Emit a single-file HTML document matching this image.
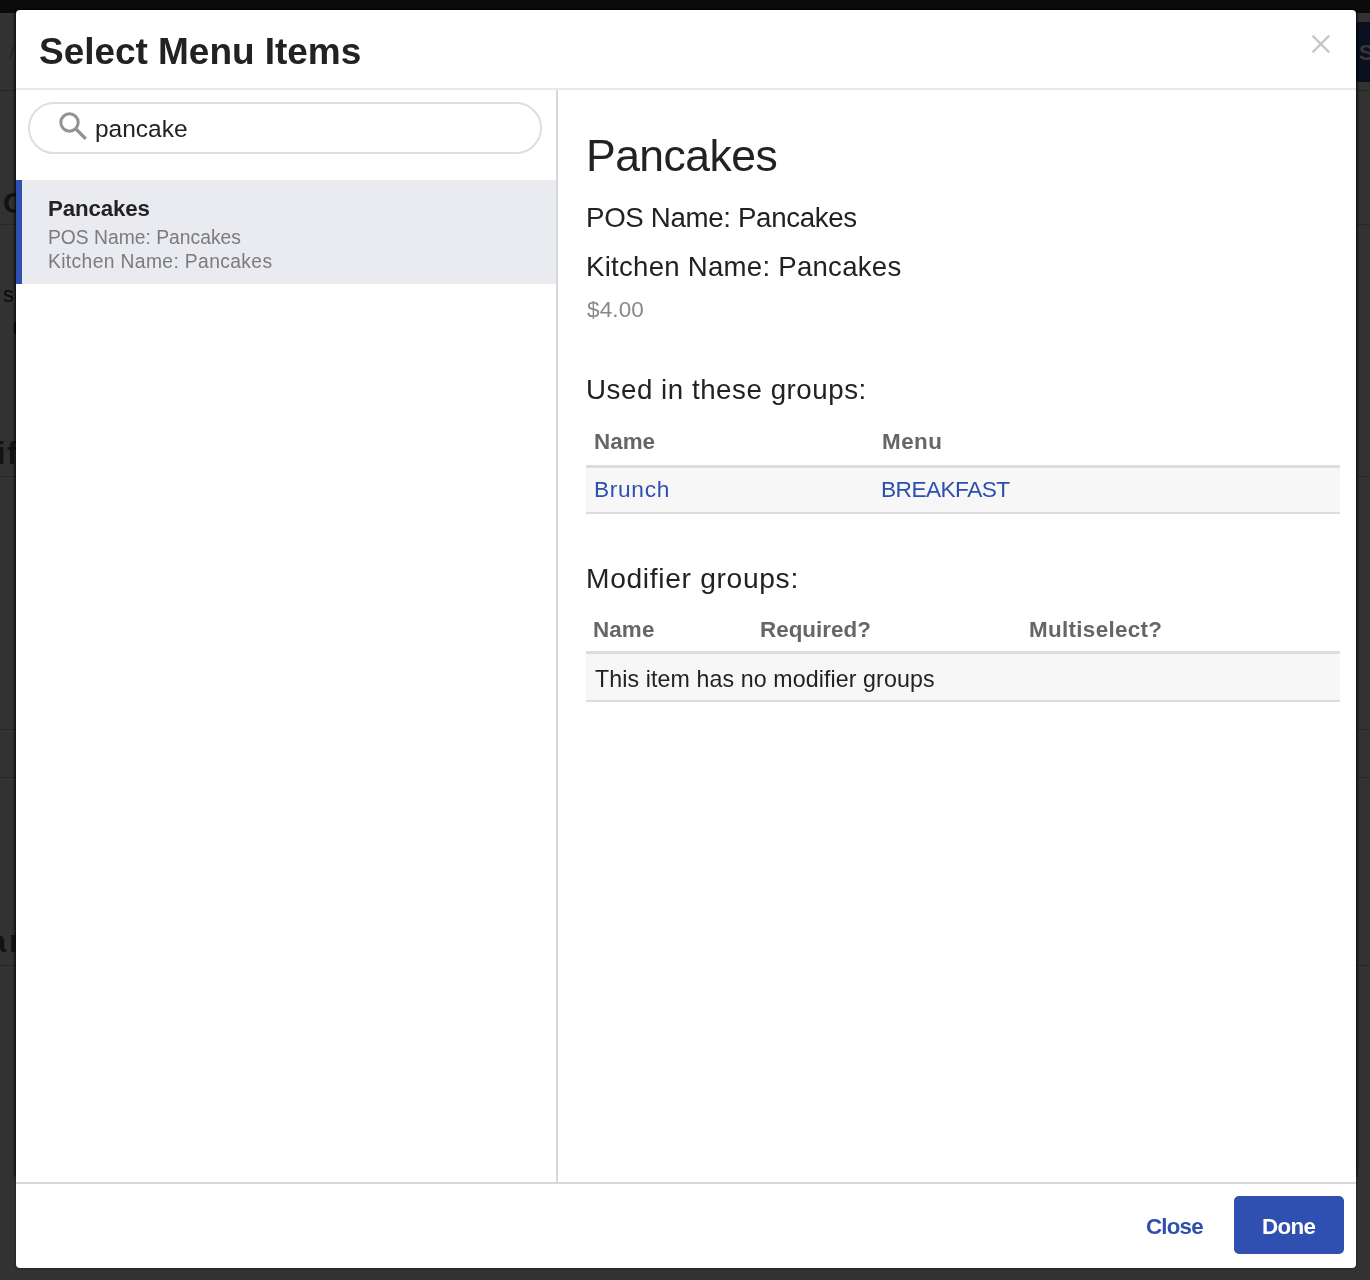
<!DOCTYPE html>
<html><head><meta charset="utf-8"><title>Select Menu Items</title><style>
html,body{margin:0;padding:0;}
body{width:1370px;height:1280px;position:relative;overflow:hidden;background:#323232;font-family:"Liberation Sans",sans-serif;}
.a{position:absolute;}
.t{position:absolute;line-height:1;white-space:nowrap;will-change:transform;}
</style></head><body>
<div class="a" style="left:0;top:0;width:1370px;height:13px;background:#0b0b0b"></div>
<div class="a" style="left:1000px;top:22px;width:370px;height:60px;background:#0a1020"></div>
<div class="a" style="left:0;top:90px;width:1370px;height:1px;background:#262626"></div>
<div class="a" style="left:0;top:224px;width:1370px;height:1px;background:#262626"></div>
<div class="a" style="left:0;top:476px;width:1370px;height:1px;background:#262626"></div>
<div class="a" style="left:0;top:729px;width:1370px;height:1px;background:#262626"></div>
<div class="a" style="left:0;top:777px;width:1370px;height:1px;background:#262626"></div>
<div class="a" style="left:0;top:965px;width:1370px;height:1px;background:#262626"></div>
<div class="t" style="left:2.50px;top:187.60px;font-size:30px;font-weight:700;color:#121212;letter-spacing:0.000px">C</div><div class="t" style="left:2.50px;top:284.17px;font-size:22px;font-weight:400;color:#0a0a0a;letter-spacing:0.000px">s</div><div class="a" style="left:14px;top:322px;width:2px;height:12px;background:#050505"></div><div class="t" style="left:-3.00px;top:437.75px;font-size:31px;font-weight:700;color:#131313;letter-spacing:0.000px">i</div><div class="t" style="left:6.50px;top:437.75px;font-size:31px;font-weight:700;color:#131313;letter-spacing:0.000px">f</div><div class="t" style="left:-11.00px;top:925.75px;font-size:31px;font-weight:700;color:#131313;letter-spacing:0.000px">a</div><div class="t" style="left:9.00px;top:925.75px;font-size:31px;font-weight:700;color:#131313;letter-spacing:0.000px">r</div><div class="t" style="left:1358.60px;top:41.97px;font-size:22px;font-weight:700;color:#393835;letter-spacing:0.000px">S</div><svg class="a" style="left:8px;top:44px" width="8" height="18"><line x1="5.5" y1="2" x2="2" y2="15" stroke="#242424" stroke-width="1.3"/></svg>
<div class="a" style="left:16px;top:10px;width:1340px;height:1166px;box-shadow:0 0 3px 1px rgba(0,0,0,.8)"></div>
<!-- modal -->
<div class="a" style="left:16px;top:10px;width:1340px;height:1258px;background:#fff;border-radius:4px;box-shadow:0 0 3px rgba(0,0,0,.6);overflow:hidden">
  <div class="a" style="left:0;top:78px;width:1340px;height:2px;background:#e8e9ee"></div>
  <div class="a" style="left:540px;top:80px;width:2px;height:1092px;background:#d7d8da"></div>
  <div class="a" style="left:0;top:1172px;width:1340px;height:2px;background:#d8d8d8"></div>
  <!-- search -->
  <div class="a" style="left:12px;top:92px;width:510px;height:48px;border:2px solid #dedede;border-radius:26px;box-sizing:content-box"></div>
  <svg class="a" style="left:40px;top:100px" width="32" height="32" viewBox="0 0 32 32">
    <circle cx="13.5" cy="12.5" r="8.7" fill="none" stroke="#929292" stroke-width="3"/>
    <line x1="20.3" y1="19.4" x2="29.75" y2="28.9" stroke="#929292" stroke-width="3.4"/>
  </svg>
  <!-- selected item -->
  <div class="a" style="left:0;top:170px;width:540px;height:104px;background:#eaebf0"></div>
  <div class="a" style="left:0;top:170px;width:6px;height:104px;background:#3050b2"></div>
  <!-- tables -->
  <div class="a" style="left:570px;top:455px;width:754px;height:3px;background:#dddddd"></div>
  <div class="a" style="left:570px;top:458px;width:754px;height:44px;background:#f7f7f7"></div>
  <div class="a" style="left:570px;top:502px;width:754px;height:2px;background:#dddddd"></div>
  <div class="a" style="left:570px;top:641px;width:754px;height:3px;background:#dddddd"></div>
  <div class="a" style="left:570px;top:644px;width:754px;height:46px;background:#f7f7f7"></div>
  <div class="a" style="left:570px;top:690px;width:754px;height:2px;background:#dddddd"></div>
  <!-- close x -->
  <svg class="a" style="left:1294px;top:23px" width="24" height="24" viewBox="0 0 24 24">
    <path d="M2.5 2.6 L19.2 19.3 M19.2 2.6 L2.5 19.3" stroke="#c8c8c8" stroke-width="2.4" fill="none"/>
  </svg>
  <!-- done button -->
  <div class="a" style="left:1218px;top:1186px;width:110px;height:58px;background:#2f50b1;border-radius:5px"></div>
</div>
<div class="t" style="left:39.17px;top:33.21px;font-size:37px;font-weight:700;color:#222;letter-spacing:-0.035px">Select Menu Items</div><div class="t" style="left:94.68px;top:117.06px;font-size:24.5px;font-weight:400;color:#222;letter-spacing:-0.003px">pancake</div><div class="t" style="left:47.61px;top:197.92px;font-size:22.3px;font-weight:700;color:#222;letter-spacing:-0.145px">Pancakes</div><div class="t" style="left:47.89px;top:228.49px;font-size:19.3px;font-weight:400;color:#7b7b7b;letter-spacing:0.002px">POS Name: Pancakes</div><div class="t" style="left:48.27px;top:252.31px;font-size:19.3px;font-weight:400;color:#7b7b7b;letter-spacing:0.359px">Kitchen Name: Pancakes</div><div class="t" style="left:586.46px;top:134.30px;font-size:44.5px;font-weight:400;color:#222;letter-spacing:-0.543px">Pancakes</div><div class="t" style="left:586.38px;top:204.09px;font-size:27.7px;font-weight:400;color:#222;letter-spacing:-0.341px">POS Name: Pancakes</div><div class="t" style="left:585.72px;top:252.51px;font-size:27.6px;font-weight:400;color:#222;letter-spacing:0.257px">Kitchen Name: Pancakes</div><div class="t" style="left:586.74px;top:299.39px;font-size:22.5px;font-weight:400;color:#888;letter-spacing:0.131px">$4.00</div><div class="t" style="left:585.53px;top:376.45px;font-size:27.7px;font-weight:400;color:#222;letter-spacing:0.546px">Used in these groups:</div><div class="t" style="left:593.84px;top:431.39px;font-size:22.4px;font-weight:700;color:#666;letter-spacing:0.028px">Name</div><div class="t" style="left:881.50px;top:431.39px;font-size:22.4px;font-weight:700;color:#666;letter-spacing:0.486px">Menu</div><div class="t" style="left:593.92px;top:478.34px;font-size:22.7px;font-weight:400;color:#2f4fb0;letter-spacing:0.676px">Brunch</div><div class="t" style="left:880.84px;top:478.34px;font-size:22.7px;font-weight:400;color:#2f4fb0;letter-spacing:-0.559px">BREAKFAST</div><div class="t" style="left:586.14px;top:563.58px;font-size:28.2px;font-weight:400;color:#222;letter-spacing:0.674px">Modifier groups:</div><div class="t" style="left:593.42px;top:619.21px;font-size:22.4px;font-weight:700;color:#666;letter-spacing:0.118px">Name</div><div class="t" style="left:759.58px;top:619.21px;font-size:22.4px;font-weight:700;color:#666;letter-spacing:0.012px">Required?</div><div class="t" style="left:1028.58px;top:619.21px;font-size:22.4px;font-weight:700;color:#666;letter-spacing:0.325px">Multiselect?</div><div class="t" style="left:594.80px;top:667.52px;font-size:23.2px;font-weight:400;color:#222;letter-spacing:0.101px">This item has no modifier groups</div><div class="t" style="left:1146.07px;top:1216.09px;font-size:22.3px;font-weight:700;color:#2f4fb0;letter-spacing:-0.777px">Close</div><div class="t" style="left:1262.13px;top:1215.57px;font-size:22.4px;font-weight:700;color:#fff;letter-spacing:-0.666px">Done</div>
</body></html>
